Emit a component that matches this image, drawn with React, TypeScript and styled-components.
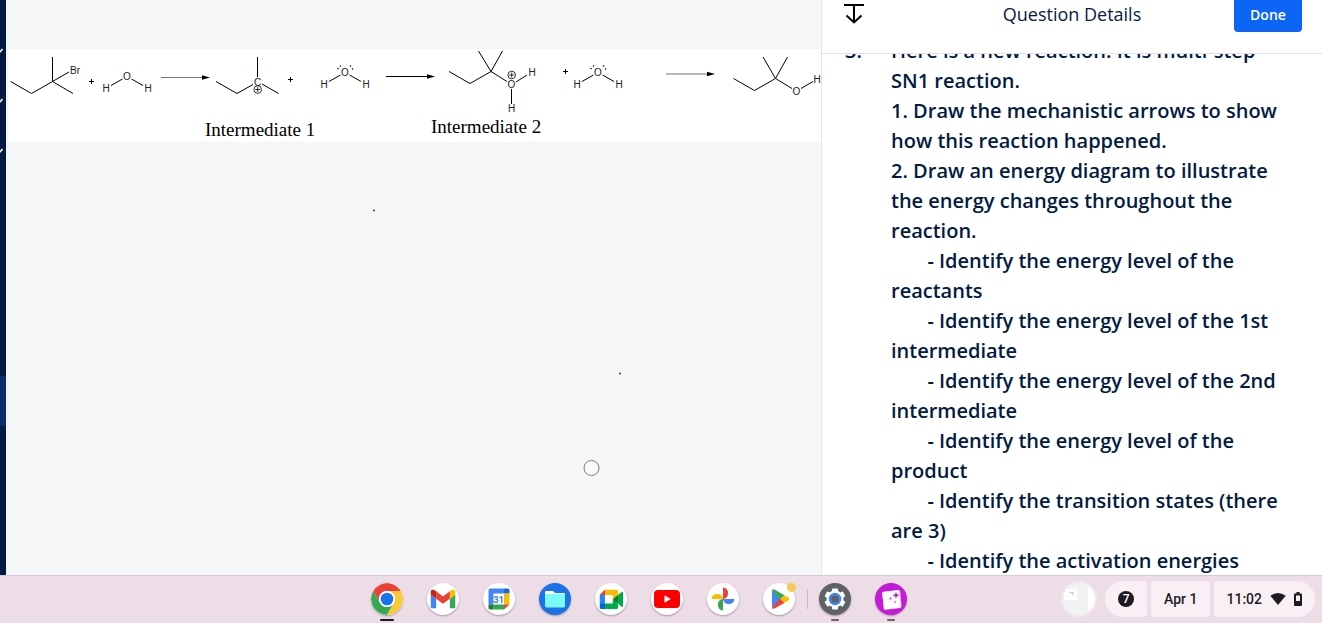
import React from "react";
import styled, { createGlobalStyle } from "styled-components";

const GlobalStyle = createGlobalStyle`
  *, *::before, *::after { box-sizing: border-box; }
  body { margin: 0; overflow: hidden; font-family: "Open Sans", sans-serif; color: #031b43; }
`;

const Screen = styled.div`
  display: flex;
  flex-direction: column;
  height: 100vh;
`;

const Workspace = styled.main`
  flex: 1;
  min-height: 0;
  display: flex;
`;

const Rail = styled.nav`
  width: 6px;
  flex: none;
  background: #031b43;
  display: flex;
  flex-direction: column;
  overflow: hidden;
  padding-top: 26px;
`;

const RailItem = styled.a<{ $active?: boolean }>`
  flex: none;
  height: 50px;
  display: flex;
  align-items: center;
  background: ${(p) => (p.$active ? "#0a2c6b" : "transparent")};
`;

const Canvas = styled.section`
  position: relative;
  flex: 1;
  min-width: 0;
  overflow: hidden;
  background: #f4f6f8;
  padding: 49px 0 0 2px;
`;

const Scheme = styled.svg`
  display: block;
  width: 100%;
  height: 93px;
  background: #fff;
`;

const Ink = styled.svg`
  position: absolute;
  inset: 0;
  width: 100%;
  height: 100%;
  pointer-events: none;
`;

const Panel = styled.aside`
  width: 501px;
  flex: none;
  display: flex;
  flex-direction: column;
  background: #fff;
  border-left: 1px solid #e3e4e8;
`;

const PanelHeader = styled.header`
  flex: none;
  height: 54px;
  display: grid;
  grid-template-columns: 1fr auto 1fr;
  align-items: start;
  padding: 0 20px;
  border-bottom: 1px solid #e0e2e6;
`;

const CollapseButton = styled.button`
  justify-self: start;
  display: flex;
  padding: 3px 0 0;
  border: 0;
  background: none;
  color: #000;
`;

const PanelTitle = styled.h2`
  margin: 0;
  font-size: 18px;
  line-height: 28px;
  font-weight: 500;
`;

const DoneButton = styled.button`
  justify-self: end;
  width: 68px;
  height: 32px;
  padding: 0 0 2px;
  border: 0;
  border-radius: 0 0 4px 4px;
  background: #0d65f5;
  color: #fff;
  font: 600 14px/20px "Open Sans", sans-serif;
`;

const QuestionScroll = styled.div`
  flex: 1;
  min-height: 0;
  overflow: hidden;
`;

const Question = styled.article`
  display: grid;
  grid-template-columns: 46px 1fr;
  margin-top: -18px;
  padding: 0 32px 0 23px;
  font-size: 20px;
  line-height: 30px;
  font-weight: 600;
`;

const QuestionLine = styled.p`
  margin: 0;
  white-space: pre-wrap;
`;

const Shelf = styled.footer`
  flex: none;
  height: 48px;
  display: grid;
  grid-template-columns: 28% 1fr auto;
  align-items: center;
  box-shadow: inset 0 1px #d9c9d3;
  background: #eddde6;
  font-family: Roboto, sans-serif;
`;

const Apps = styled.div`
  grid-column: 2;
  display: flex;
  align-items: center;
  gap: 24px;
  padding-left: 1px;
`;

const AppButton = styled.button<{ $bg?: string }>`
  position: relative;
  width: 32px;
  height: 32px;
  padding: 0;
  border: 0;
  border-radius: 50%;
  background: ${(p) => p.$bg ?? "#fff"};
  box-shadow: 0 1px 2px rgba(60, 40, 55, 0.4);

  & > svg { display: block; border-radius: 50%; }
`;

const Running = styled.span<{ $focused?: boolean }>`
  position: absolute;
  left: 50%;
  top: 36px;
  width: ${(p) => (p.$focused ? "14px" : "8px")};
  height: 2px;
  border-radius: 1px;
  transform: translateX(-50%);
  background: ${(p) => (p.$focused ? "#1d1b20" : "#75606e")};
`;

const Notice = styled.span`
  position: absolute;
  right: -1px;
  top: 0;
  width: 9px;
  height: 9px;
  border-radius: 50%;
  background: #f6cb55;
`;

const Divider = styled.span`
  width: 1px;
  height: 20px;
  margin: 0 -13px 0 -12px;
  background: #c9b9c3;
`;

const Tray = styled.div`
  display: flex;
  align-items: center;
  gap: 4px;
  padding-right: 7px;
`;

const Preview = styled.button`
  width: 36px;
  height: 36px;
  margin-right: 4px;
  padding: 0;
  border: 2px solid #f4e8ef;
  border-radius: 50%;
  overflow: hidden;
  background: #f0f2f4;

  & > svg { display: block; }
`;

const TrayButton = styled.button<{ $end?: "left" | "right" }>`
  display: flex;
  align-items: center;
  gap: 8px;
  height: 36px;
  padding: ${(p) => (p.$end === "right" ? "0 13px 0 12px" : "0 13px")};
  border: 0;
  border-radius: ${(p) =>
    p.$end === "left" ? "18px 4px 4px 18px" : p.$end === "right" ? "4px 18px 18px 4px" : "4px"};
  background: #f9f0f5;
  color: #1d1b20;
  font: 500 14px/20px Roboto, sans-serif;
`;

const Count = styled.span`
  width: 16px;
  height: 16px;
  border-radius: 50%;
  background: #1d1b20;
  color: #fff;
  font-size: 12px;
  line-height: 16px;
  text-align: center;
`;

type Pt = [number, number];

const Bond = ({ points }: { points: Pt[] }) => (
  <polyline points={points.map((p) => p.join(",")).join(" ")} fill="none" stroke="#000" strokeWidth="1" />
);

const Atom = ({ x, y, children }: { x: number; y: number; children: string }) => (
  <text x={x} y={y + 3.5} textAnchor="middle" fontFamily="Liberation Sans, sans-serif" fontSize="10" fill="#222">
    {children}
  </text>
);

const Plus = ({ x, y }: { x: number; y: number }) => (
  <path d={`M${x - 2.5} ${y}h5M${x} ${y - 2.5}v5`} stroke="#000" strokeWidth="1" />
);

const Charge = ({ x, y }: { x: number; y: number }) => (
  <g fill="none" stroke="#000" strokeWidth="0.8">
    <circle cx={x} cy={y} r="3.8" />
    <path d={`M${x - 2.5} ${y}h5M${x} ${y - 2.5}v5`} />
  </g>
);

const Arrow = ({ x, y, soft }: { x: number; y: number; soft?: boolean }) => (
  <g>
    <path d={`M${x} ${y}h44`} stroke={soft ? "#777" : "#000"} strokeWidth="1" />
    <path d={`M${x + 41} ${y - 2.3}l8 2.3l-8 2.3z`} />
  </g>
);

const Water = ({ x, y, pairs }: { x: number; y: number; pairs?: boolean }) => (
  <g>
    <Atom x={x} y={y}>O</Atom>
    <Atom x={x - 21} y={y + 12}>H</Atom>
    <Atom x={x + 21} y={y + 12}>H</Atom>
    <Bond points={[[x - 16, y + 9], [x - 4.5, y + 2.5]]} />
    <Bond points={[[x + 4.5, y + 2.5], [x + 16, y + 9]]} />
    {pairs && (
      <g>
        <circle cx={x - 7} cy={y - 4} r="0.8" />
        <circle cx={x - 4.5} cy={y - 6.5} r="0.8" />
        <circle cx={x + 5.5} cy={y - 6.5} r="0.8" />
        <circle cx={x + 7.5} cy={y - 3.5} r="0.8" />
      </g>
    )}
  </g>
);

const Caption = ({ x, y, children }: { x: number; y: number; children: string }) => (
  <text x={x} y={y} fontFamily="Liberation Serif, serif" fontSize="19">{children}</text>
);

const ReactionScheme = () => (
  <Scheme viewBox="8 49 813 93" preserveAspectRatio="xMinYMin slice" role="img" aria-label="Reaction scheme">
    <Bond points={[[10.5, 81.5], [31.5, 93.5], [52.5, 81.5], [52.5, 57]]} />
    <Bond points={[[52.5, 81.5], [73, 93.5]]} />
    <Bond points={[[52.5, 81.5], [69, 72]]} />
    <Atom x={75} y={70.5}>Br</Atom>
    <Plus x={91.5} y={81.5} />
    <Water x={127} y={76.5} />
    <Arrow x={161} y={77.5} soft />

    <Bond points={[[216, 81.5], [237, 93.5], [253, 84.5]]} />
    <Bond points={[[257.5, 57], [257.5, 77]]} />
    <Bond points={[[262, 84], [278.5, 93.5]]} />
    <Atom x={257.5} y={82.5}>C</Atom>
    <Charge x={257.7} y={89.5} />
    <Plus x={290.5} y={79.5} />
    <Water x={345} y={72.5} pairs />
    <Caption x={205} y={136}>Intermediate 1</Caption>
    <Arrow x={386} y={76.5} />

    <Bond points={[[449, 71.5], [470, 83.5], [491, 71.5], [478.5, 51]]} />
    <Bond points={[[502.5, 51], [491, 71.5], [507, 81.5]]} />
    <Atom x={511.5} y={84.5}>O</Atom>
    <Charge x={511.7} y={75} />
    <Bond points={[[516, 82], [527, 75]]} />
    <Atom x={532} y={72.5}>H</Atom>
    <Bond points={[[511.5, 89], [511.5, 104]]} />
    <Atom x={511.5} y={108.5}>H</Atom>
    <Caption x={431} y={133}>Intermediate 2</Caption>
    <Plus x={565.5} y={71.5} />
    <Water x={598} y={72.5} pairs />
    <Arrow x={666} y={74} soft />

    <Bond points={[[733.5, 78.5], [754.5, 90.5], [775.5, 78.5], [763, 57]]} />
    <Bond points={[[787.5, 57], [775.5, 78.5], [792, 88.5]]} />
    <Atom x={796.5} y={91}>O</Atom>
    <Bond points={[[801, 88.5], [813, 81.5]]} />
    <Atom x={817} y={79}>H</Atom>
  </Scheme>
);

const ChromeIcon = () => (
  <svg width="32" height="32" viewBox="0 0 48 48">
    <path d="M3.22 12 13.61 30A12 12 0 0 1 24 12H44.78A24 24 0 0 0 3.22 12z" fill="#ea4335" />
    <path d="M3.22 12 13.61 30A12 12 0 0 0 34.39 30L24 48A24 24 0 0 1 3.22 12z" fill="#34a853" />
    <path d="M44.78 12H24A12 12 0 0 1 34.39 30L24 48A24 24 0 0 0 44.78 12z" fill="#fbc934" />
    <circle cx="24" cy="24" r="12" fill="#fff" />
    <circle cx="24" cy="24" r="9.5" fill="#1a73e8" />
  </svg>
);

const GmailIcon = () => (
  <svg width="32" height="32" viewBox="0 0 32 32">
    <svg x="3.5" y="6.5" width="25" height="19" viewBox="52 42 88 66">
      <path d="M58 108h14V74L52 59v43c0 3.32 2.69 6 6 6" fill="#4285f4" />
      <path d="M120 108h14c3.32 0 6-2.69 6-6V59l-20 15" fill="#34a853" />
      <path d="M120 48v26l20-15v-8c0-7.42-8.47-11.65-14.4-7.2" fill="#fbbc04" />
      <path d="M72 74V48l24 18 24-18v26L96 92" fill="#ea4335" />
      <path d="M52 51v8l20 15V48l-5.6-4.2c-5.94-4.45-14.4-.22-14.4 7.2" fill="#c5221f" />
    </svg>
  </svg>
);

const CalendarIcon = () => (
  <svg width="32" height="32" viewBox="0 0 32 32">
    <path d="M7 5.5h14v5H10.500v11h-5V7q0-1.500 1.500-1.500z" fill="#4285f4" />
    <path d="M21 5.500h4q1.500 0 1.500 1.500v3.500H21z" fill="#1967d2" />
    <path d="M21 10.500h5.500v11H21z" fill="#fbbc04" />
    <path d="M10.500 21.500H21v5H10.500z" fill="#34a853" />
    <path d="M5.500 21.500h5v5H7q-1.500 0-1.500-1.500z" fill="#188038" />
    <path d="M21 21.500h5.500l-5.500 5z" fill="#ea4335" />
    <text x="15.700" y="19.500" textAnchor="middle" fontFamily="Roboto, sans-serif" fontSize="9" fontWeight="700" fill="#3478e5">31</text>
  </svg>
);

const FilesIcon = () => (
  <svg width="32" height="32" viewBox="0 0 32 32">
    <path d="M7 8h7l2 2h9q1 0 1 1v11H6V9q0-1 1-1z" fill="#fff" />
    <path d="M6 11h20v12q0 1.500-1.500 1.500h-17Q6 24.500 6 23z" fill="#7df9f6" />
  </svg>
);

const MeetIcon = () => (
  <svg width="32" height="32" viewBox="0 0 32 32">
    <svg x="4.500" y="6.500" width="23.500" height="19.500" viewBox="0 0 87.5 72">
      <path d="M49.5 36l8.53 9.75 11.47 7.33 2-17.02-2-16.64-11.69 6.44z" fill="#00832d" />
      <path d="M0 51.5V66c0 3.315 2.685 6 6 6h14.5l3-10.96-3-9.54-9.95-3z" fill="#0066da" />
      <path d="M20.5 0L0 20.5l10.55 3 9.95-3 2.95-9.41z" fill="#e94235" />
      <path d="M20.5 20.5H0v31h20.5z" fill="#2684fc" />
      <path d="M82.6 8.68L69.5 19.42v33.66l13.16 10.79c1.97 1.54 4.85.135 4.85-2.37V11c0-2.535-2.945-3.925-4.91-2.32zM49.5 36v15.5h-29V72h43c3.315 0 6-2.685 6-6V53.08z" fill="#00ac47" />
      <path d="M63.5 0h-43v20.5h29V36l20-16.57V6c0-3.315-2.685-6-6-6z" fill="#ffba00" />
    </svg>
  </svg>
);

const YouTubeIcon = () => (
  <svg width="32" height="32" viewBox="0 0 32 32">
    <rect x="3" y="7" width="26" height="18" rx="4" fill="#f00" />
    <path d="M13.500 12.200v7.600l6.300-3.800z" fill="#fff" />
  </svg>
);

const PhotosIcon = () => (
  <svg width="32" height="32" viewBox="0 0 32 32">
    <path d="M16 4.500a5.800 5.800 0 0 1 0 11.500z" fill="#ea4335" />
    <path d="M27.500 16a5.800 5.800 0 0 1-11.500 0z" fill="#4285f4" />
    <path d="M16 27.500a5.800 5.800 0 0 1 0-11.500z" fill="#34a853" />
    <path d="M4.500 16a5.800 5.800 0 0 1 11.500 0z" fill="#fbbc04" />
  </svg>
);

const PlayIcon = () => (
  <svg width="32" height="32" viewBox="0 0 32 32">
    <path d="M9 7.500v17L17.500 16z" fill="#4285f4" />
    <path d="M9 7.500Q9.500 5.500 11.500 6.500L21.500 12.300 17 16.500z" fill="#34a853" />
    <path d="M9 24.500Q9.500 26.500 11.500 25.500L21.500 19.700 17 15.500z" fill="#ea4335" />
    <path d="M21.300 12.200l4 2.300q2 1.500 0 3l-4 2.300L17.300 16z" fill="#fbbc04" />
  </svg>
);

const SettingsIcon = () => (
  <svg width="32" height="32" viewBox="0 0 32 32">
    <g fill="#fff">
      <circle cx="16" cy="16" r="8.500" />
      {[0, 60, 120].map((a) => (
        <rect key={a} x="13" y="5.500" width="6" height="21" rx="1" transform={`rotate(${a} 16 16)`} />
      ))}
    </g>
    <circle cx="16" cy="16" r="5" fill="#5f6368" stroke="#4285f4" strokeWidth="2.500" />
  </svg>
);

const GalleryIcon = () => (
  <svg width="32" height="32" viewBox="0 0 32 32">
    <rect x="8" y="8" width="18" height="17" rx="1" fill="#f3b7f5" transform="rotate(-5 17 17)" />
    <rect x="8" y="8" width="17" height="18" rx="1" fill="#fff" transform="rotate(-7 16 17)" />
    <path d="M21 9.500l.8 2 2 .8-2 .8-.8 2-.8-2-2-.8 2-.8z" fill="#a61cc0" stroke="#a61cc0" strokeWidth="0.500" />
    <path d="M15.500 13l.6 1.900 1.900.6-1.900.6-.6 1.900-.6-1.900-1.900-.6 1.900-.6zM20 17l.5 1.500 1.500.5-1.500.5-.5 1.500-.5-1.500-1.500-.5 1.500-.5z" fill="#e06be8" />
  </svg>
);

const questionLines = [
  "Here is a new reaction. It is multi-step SN1 reaction.",
  "1. Draw the mechanistic arrows to show how this reaction happened.",
  "2. Draw an energy diagram to illustrate the energy changes throughout the reaction.",
  "       - Identify the energy level of the reactants",
  "       - Identify the energy level of the 1st intermediate",
  "       - Identify the energy level of the 2nd intermediate",
  "       - Identify the energy level of the product",
  "       - Identify the transition states (there are 3)",
  "       - Identify the activation energies",
];

const apps = [
  { name: "Chrome", Icon: ChromeIcon, focused: true },
  { name: "Gmail", Icon: GmailIcon },
  { name: "Calendar", Icon: CalendarIcon },
  { name: "Files", Icon: FilesIcon, bg: "#1a73e8" },
  { name: "Meet", Icon: MeetIcon },
  { name: "YouTube", Icon: YouTubeIcon },
  { name: "Photos", Icon: PhotosIcon },
  { name: "Play Store", Icon: PlayIcon, notice: true },
];

const openApps = [
  { name: "Settings", Icon: SettingsIcon, bg: "#5f6368" },
  { name: "Gallery", Icon: GalleryIcon, bg: "#c41ad9" },
];

const railItems = [true, true, true, false, false, false, false, false, false, false];

export default function App() {
  return (
    <>
      <GlobalStyle />
      <Screen>
        <Workspace>
          <Rail aria-label="Questions">
            {railItems.map((done, i) => (
              <RailItem key={i} href={`#question-${i + 1}`} aria-label={`Question ${i + 1}`} $active={i === 7}>
                {done && (
                  <svg width="3" height="6" viewBox="0 0 3 6">
                    <path d="M-1 5L2.500 1" stroke="#fff" strokeWidth="1.600" />
                  </svg>
                )}
              </RailItem>
            ))}
          </Rail>

          <Canvas aria-label="Drawing area">
            <ReactionScheme />
            <Ink aria-hidden="true">
              <circle cx="368" cy="210.500" r="0.900" fill="#222" />
              <circle cx="614" cy="373.500" r="0.900" fill="#222" />
              <circle cx="585.500" cy="468" r="7.500" fill="#fafafa" stroke="#777" />
            </Ink>
          </Canvas>

          <Panel>
            <PanelHeader>
              <CollapseButton aria-label="Collapse details">
                <svg width="24" height="24" viewBox="0 0 24 24" fill="none" stroke="currentColor" strokeWidth="2">
                  <path d="M2 2h20M12 2v17M4.500 12.500l7.500 7 7.500-7" />
                </svg>
              </CollapseButton>
              <PanelTitle>Question Details</PanelTitle>
              <DoneButton>Done</DoneButton>
            </PanelHeader>
            <QuestionScroll>
              <Question>
                <span>3.</span>
                <div>
                  {questionLines.map((line) => (
                    <QuestionLine key={line}>{line}</QuestionLine>
                  ))}
                </div>
              </Question>
            </QuestionScroll>
          </Panel>
        </Workspace>

        <Shelf>
          <Apps>
            {apps.map(({ name, Icon, bg, focused, notice }) => (
              <AppButton key={name} aria-label={name} $bg={bg}>
                <Icon />
                {focused && <Running $focused />}
                {notice && <Notice />}
              </AppButton>
            ))}
            <Divider />
            {openApps.map(({ name, Icon, bg }) => (
              <AppButton key={name} aria-label={name} $bg={bg}>
                <Icon />
                <Running />
              </AppButton>
            ))}
          </Apps>
          <Tray>
            <Preview aria-label="Recent screenshot">
              <svg width="32" height="32" viewBox="0 0 32 32">
                <rect x="25" width="7" height="32" fill="#fff" />
                <rect x="1" y="6" width="13" height="11" rx="1" fill="#fff" />
                <path d="M6 9l3 1 2 3M9 10l2-1" stroke="#aaa" strokeWidth="0.700" fill="none" />
              </svg>
            </Preview>
            <TrayButton $end="left" aria-label="7 notifications">
              <Count>7</Count>
            </TrayButton>
            <TrayButton>Apr 1</TrayButton>
            <TrayButton $end="right">
              11:02
              <svg width="16" height="14" viewBox="0 0 16 14" fill="currentColor">
                <path d="M0.300 3.800Q8-1.800 15.700 3.800L8 13z" />
              </svg>
              <svg width="8" height="14" viewBox="0 0 8 14" fill="currentColor" fillRule="evenodd">
                <path d="M2.500 0h3v1.500H7q1 0 1 1V13q0 1-1 1H1q-1 0-1-1V2.500q0-1 1-1h1.500zM2 3.500V9h4V3.500z" />
              </svg>
            </TrayButton>
          </Tray>
        </Shelf>
      </Screen>
    </>
  );
}
